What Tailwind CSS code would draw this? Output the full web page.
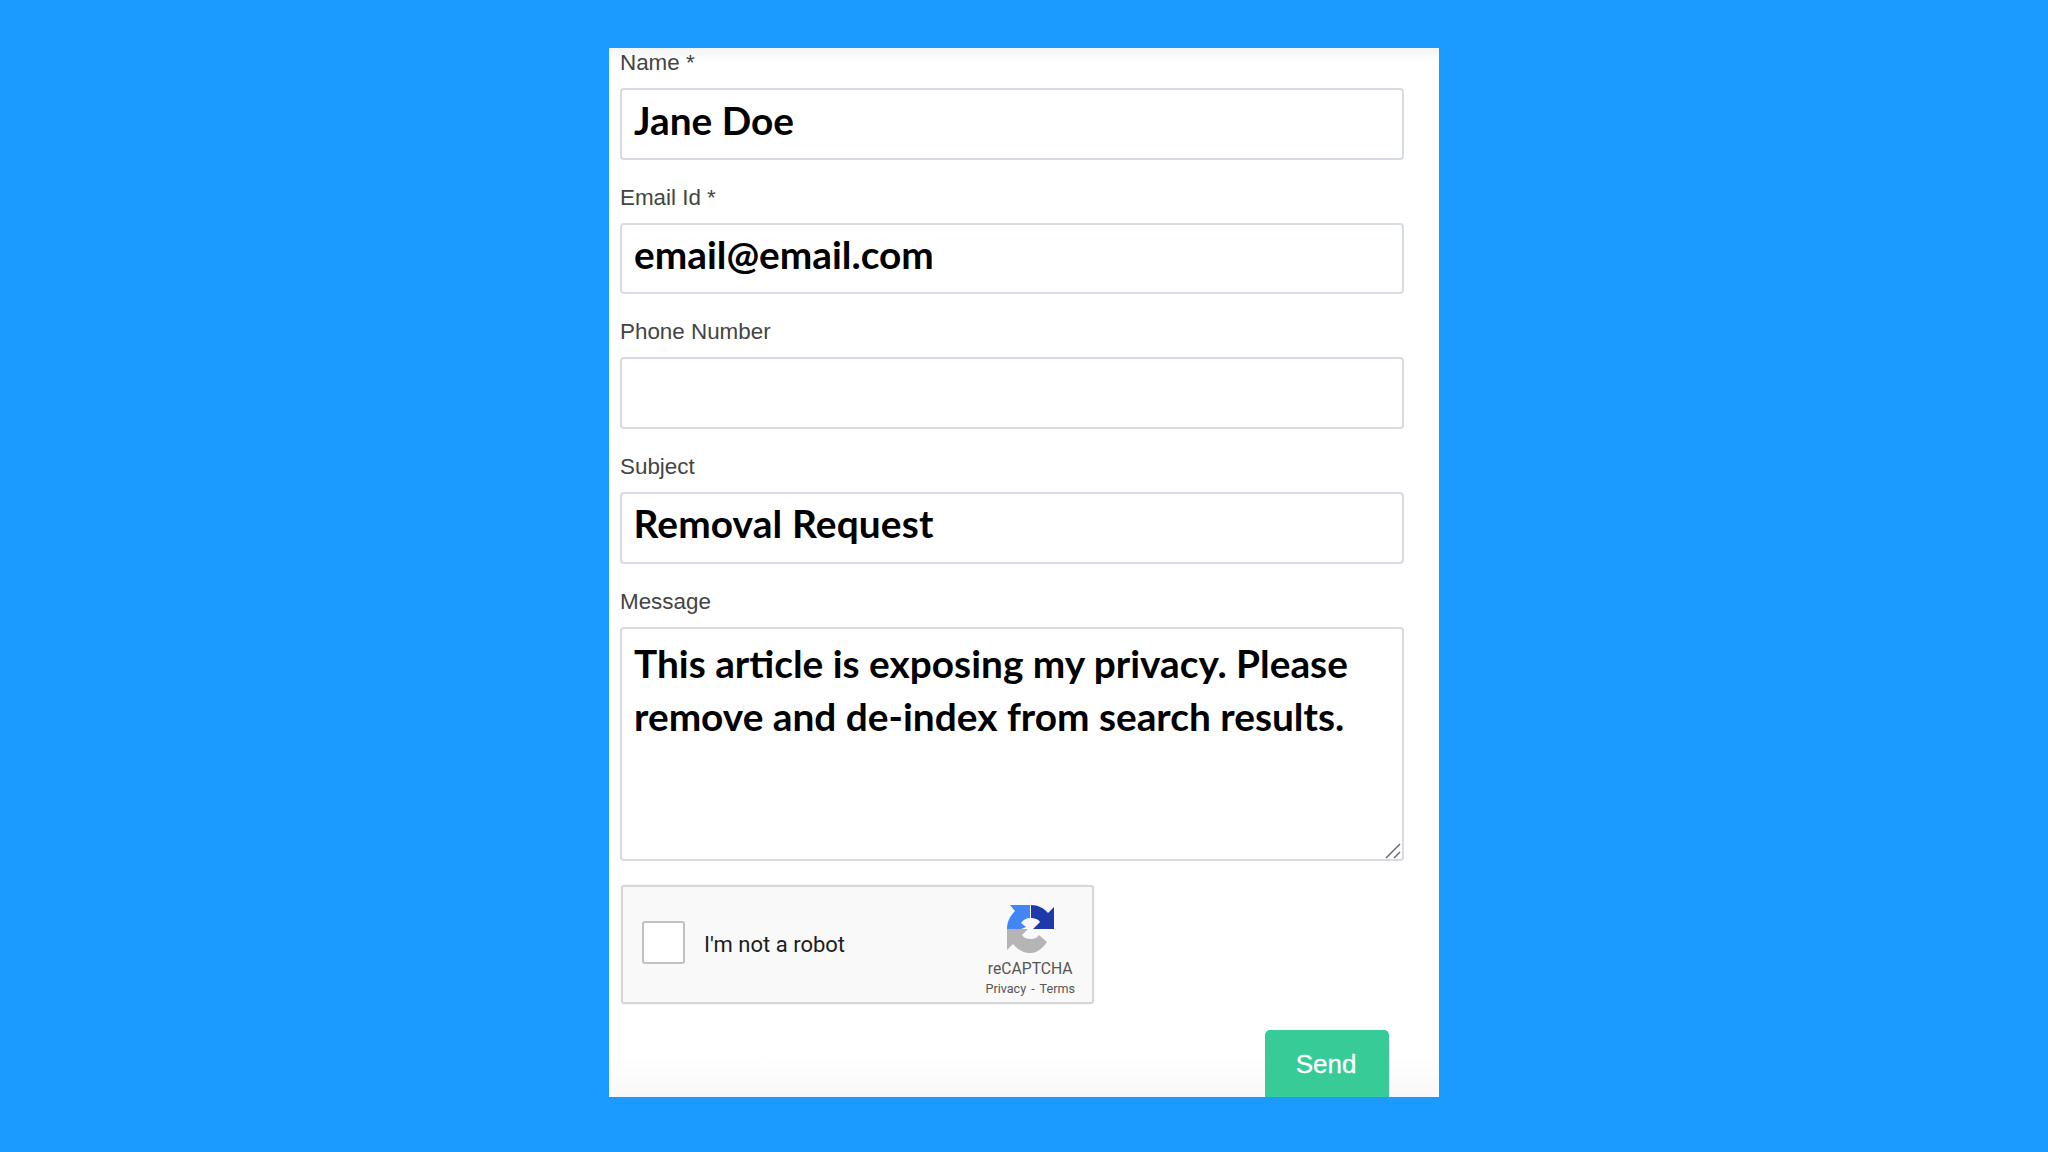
<!DOCTYPE html>
<html lang="en">
<head>
    <meta charset="UTF-8" />
    <title>Contact form</title>
    <script src="https://cdn.jsdelivr.net/npm/@tailwindcss/browser@4"></script>
</head>
<body class="bg-[#1b9bff] h-[1152px] overflow-hidden flex justify-center items-start pt-[48px]">
    <div class="w-[830px] h-[1049px] overflow-hidden bg-[linear-gradient(#f3f4f4,#ffffff_14px,#ffffff_96%,#f8f8f8)] pl-[11px] font-['Lato',sans-serif]">
        <form class="flex flex-col gap-[22.5px] w-[784px]">
            <div>
                <label class="block h-[30px] leading-[30px] mb-[10px] text-[22.4px] text-[#444444] font-['Liberation_Sans',sans-serif]">Name *</label>
                <input type="text" value="Jane Doe" class="block w-full h-[72px] border-2 border-[#d6dbe6] rounded-[4px] pl-[12px] pb-[8px] text-[38.8px] font-bold text-black font-['Lato',sans-serif] outline-none" />
            </div>
            <div>
                <label class="block h-[30px] leading-[30px] mb-[10px] text-[22.4px] text-[#444444] font-['Liberation_Sans',sans-serif]">Email Id *</label>
                <input type="text" value="email@email.com" class="block w-full h-[71px] mb-px border-2 border-[#d6dbe6] rounded-[4px] pl-[12px] pb-[9px] text-[38.8px] font-bold text-black font-['Lato',sans-serif] outline-none" />
            </div>
            <div>
                <label class="block h-[30px] leading-[30px] mb-[10px] text-[22.4px] text-[#444444] font-['Liberation_Sans',sans-serif]">Phone Number</label>
                <input type="text" class="block w-full h-[72px] border-2 border-[#d6dbe6] rounded-[4px] pl-[12px] text-[38.8px] font-bold text-black outline-none" />
            </div>
            <div>
                <label class="block h-[30px] leading-[30px] mb-[10px] text-[22.4px] text-[#444444] font-['Liberation_Sans',sans-serif]">Subject</label>
                <input type="text" value="Removal Request" class="block w-full h-[72px] mb-px border-2 border-[#d6dbe6] rounded-[4px] pl-[11.5px] pb-[10px] text-[38.8px] tracking-[0.15px] font-bold text-black font-['Lato',sans-serif] outline-none" />
            </div>
            <div>
                <label class="block h-[30px] leading-[30px] mb-[10px] text-[22.4px] text-[#444444] font-['Liberation_Sans',sans-serif]">Message</label>
                <div class="relative">
                    <textarea class="block w-full h-[234px] resize-none border-2 border-[#d6dbe6] rounded-[4px] px-[12px] pt-[8px] text-[38.8px] leading-[53px] font-bold text-black font-['Lato',sans-serif] outline-none">This article is exposing my privacy. Please remove and de-index from search results.</textarea>
                    <svg class="absolute right-[2px] bottom-[2px] w-[18px] h-[18px]" viewBox="0 0 18 18" fill="none" stroke="#666666" stroke-width="1.4">
                        <path d="M2 17L16 3" />
                        <path d="M10 17L16 11" />
                    </svg>
                </div>
            </div>
        </form>

        <!-- reCAPTCHA -->
        <div class="mt-[24px] w-[473px] h-[119px] ml-px bg-[#f9f9f9] border-2 border-[#d6d6d6] rounded-[3px] shadow-[0_0_3px_rgba(0,0,0,0.08)] flex items-center pl-[19px] pr-[17px] font-['Roboto',sans-serif]">
            <div class="w-[43px] h-[43px] mb-[4px] bg-white border-2 border-[#c1c1c1] rounded-[3px]"></div>
            <span class="ml-[19px] text-[22px] text-[#1c1c1c]">I'm not a robot</span>
            <div class="ml-auto mt-[12px] flex flex-col items-center">
                <svg class="w-[47px] h-[48px]" viewBox="0 0 47 48">
                    <path fill="#1c3aa9" d="M24 0C31 0 37 3 41 8L47 2V24H26L33 17C31 14 28 13 24 13Z" />
                    <path fill="#4285f4" d="M3 0H23V13C19 13 16 15 14 18L19 22L14 24H0C0 17 3 11 8 6Z" />
                    <path fill="#b5b5b5" d="M0 24H21L15 30C17 33 20 34 24 34C27 34 30 33 32 30L40 37C36 43 30 48 24 48C16 48 10 44 6 39L0 45Z" />
                </svg>
                <span class="mt-[7px] text-[15.7px] leading-[18px] text-[#555555]">reCAPTCHA</span>
                <span class="mt-[3px] text-[12.6px] leading-[16px] [word-spacing:2px] text-[#555555]">Privacy - Terms</span>
            </div>
        </div>

        <div class="flex justify-end w-[769px] mt-[26px]">
            <button type="button" class="w-[124px] h-[80px] pb-[11px] pr-[2px] bg-[#36cb97] rounded-[5px] text-white text-[26px] font-['Liberation_Sans',sans-serif] [-webkit-text-stroke:0.3px_white]">Send</button>
        </div>
    </div>
</body>
</html>
